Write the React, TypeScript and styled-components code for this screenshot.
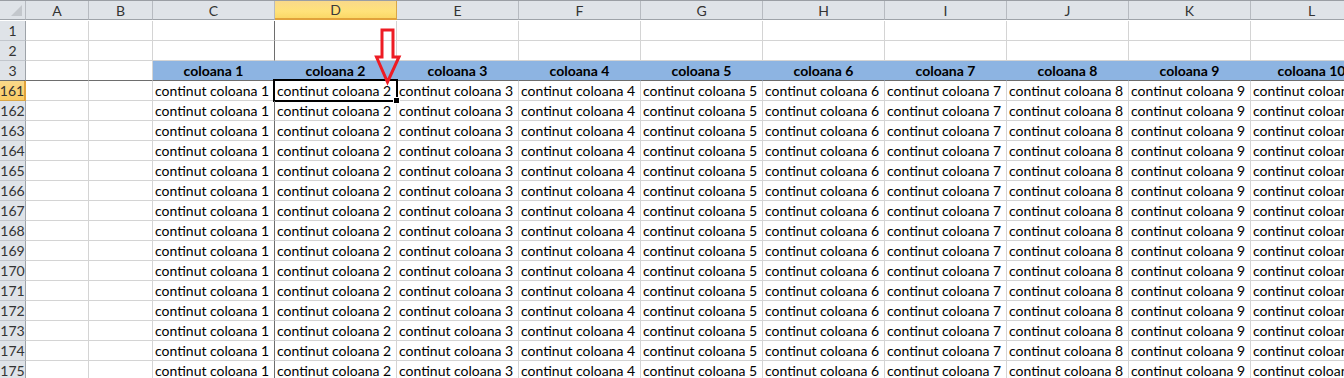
import React from 'react';
import styled, { createGlobalStyle, css } from 'styled-components';

const GlobalStyle = createGlobalStyle`
  html, body {
    margin: 0;
    padding: 0;
    background: #ffffff;
    overflow: hidden;
  }
  body {
    font-family: Lato, "Liberation Sans", Arial, sans-serif;
  }
`;

const GRID = '#d4d4d4';
const FREEZE = '#6e6e6e';

const Sheet = styled.div`
  position: relative;
  width: 1344px;
  height: 378px;
  overflow: hidden;
  background: #fff;
`;

const Grid = styled.div`
  display: grid;
  grid-template-columns: 26px 63px 64px repeat(10, 122px);
  grid-auto-rows: 20px;
  border-top: 1px solid #9a9ea4;
  box-sizing: border-box;
`;

const Corner = styled.div`
  position: relative;
  background: #dfe3e8;
  border-right: 1px solid #b6bac0;
  border-bottom: 1px solid #9ea3a9;
  box-sizing: border-box;
  height: 19px;

  &::after {
    content: '';
    position: absolute;
    right: 3px;
    bottom: 3px;
    width: 0;
    height: 0;
    border-left: 11px solid transparent;
    border-bottom: 11px solid #c3c7cc;
  }
`;

const ColHead = styled.div<{ $active?: boolean }>`
  height: 19px;
  box-sizing: border-box;
  display: flex;
  align-items: center;
  justify-content: center;
  font-size: 14px;
  color: #333;
  background: #dfe3e8;
  border-right: 1px solid #b6bac0;
  border-bottom: 1px solid #9ea3a9;

  ${p => p.$active && css`
    background: linear-gradient(#f9d98a, #ffe27a 60%, #fbd867);
    border-bottom: 2px solid #e1a23b;
    border-right-color: #d9a646;
    color: #3a3a3a;
  `}
`;

const RowHead = styled.div<{ $active?: boolean; $freeze?: boolean }>`
  box-sizing: border-box;
  display: flex;
  align-items: center;
  justify-content: center;
  font-size: 14px;
  color: #333;
  background: #dfe3e8;
  border-right: 1px solid #9ea3a9;
  border-bottom: 1px solid ${p => (p.$freeze ? FREEZE : '#c2c6cc')};

  ${p => p.$active && css`
    background: linear-gradient(#f9d98a, #fbcb64);
    border-right: 2px solid #e1a23b;
    border-bottom-color: #d9a646;
  `}
`;

const Cell = styled.div<{ $title?: boolean; $freezeRight?: boolean; $freezeBottom?: boolean; $selected?: boolean }>`
  position: relative;
  box-sizing: border-box;
  padding-left: 2px;
  font-size: 14px;
  color: #000;
  white-space: nowrap;
  overflow: visible;
  line-height: 19px;
  border-right: 1px solid ${p => (p.$freezeRight ? FREEZE : GRID)};
  border-bottom: 1px solid ${p => (p.$freezeBottom ? FREEZE : GRID)};

  ${p => p.$title && css`
    background: #8db4e2;
    font-weight: 700;
    text-align: center;
    padding-left: 0;
    border-right-color: ${p.$freezeRight ? FREEZE : '#8db4e2'};
  `}

  ${p => p.$selected && css`
    &::after {
      content: '';
      position: absolute;
      left: -2px;
      top: -2px;
      right: -2px;
      bottom: -2px;
      border: 2px solid #000;
      pointer-events: none;
    }
    &::before {
      content: '';
      position: absolute;
      right: -4px;
      bottom: -4px;
      width: 5px;
      height: 5px;
      background: #000;
      border: 1px solid #fff;
      z-index: 2;
    }
  `}
`;

const Arrow = styled.svg`
  position: absolute;
  left: 374px;
  top: 28px;
  z-index: 3;
`;

const letters = ['A', 'B', 'C', 'D', 'E', 'F', 'G', 'H', 'I', 'J', 'K', 'L'];
const rows = [1, 2, 3, ...Array.from({ length: 15 }, (_, i) => 161 + i)];

export default function App() {
  return (
    <>
      <GlobalStyle />
      <Sheet>
        <Grid>
          <Corner />
          {letters.map(l => (
            <ColHead key={l} $active={l === 'D'}>{l}</ColHead>
          ))}

          {rows.map(r => (
            <React.Fragment key={r}>
              <RowHead $active={r === 161} $freeze={r === 3}>{r}</RowHead>
              {letters.map((l, ci) => {
                const dataCol = ci >= 2 ? ci - 1 : 0;
                let text = '';
                if (dataCol > 0 && r === 3) text = `coloana ${dataCol}`;
                else if (dataCol > 0 && r >= 161) text = `continut coloana ${dataCol}`;
                return (
                  <Cell
                    key={l}
                    $title={dataCol > 0 && r === 3}
                    $freezeRight={l === 'C' && r !== 3}
                    $freezeBottom={r === 3}
                    $selected={l === 'D' && r === 161}
                  >
                    {text}
                  </Cell>
                );
              })}
            </React.Fragment>
          ))}
        </Grid>

        <Arrow width="28" height="58" viewBox="0 0 28 58">
          <polygon
            points="8,2 19,2 19,29 25,29 13.5,54 2.5,29 8,29"
            fill="none"
            stroke="#ed1c24"
            strokeWidth="3"
            strokeLinejoin="miter"
          />
        </Arrow>
      </Sheet>
    </>
  );
}
